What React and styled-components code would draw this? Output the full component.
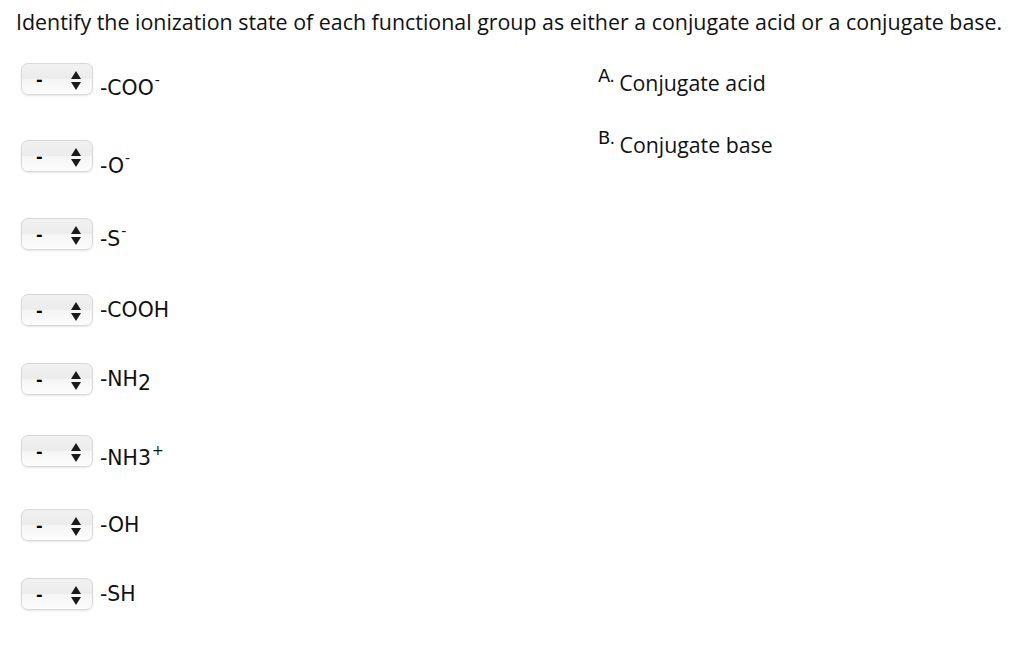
import React from "react";
import styled, { createGlobalStyle } from "styled-components";

const Global = createGlobalStyle`
  html, body { margin: 0; padding: 0; background: #fff; }
  body { font-family: "Open Sans", "Liberation Sans", sans-serif; color: #111; }
`;

const Page = styled.div`
  width: 1024px;
  height: 646px;
  box-sizing: border-box;
  padding: 8px 0 0 16px;
  overflow: hidden;
`;

const Prompt = styled.p`
  margin: 0;
  font-size: 21.4px;
  line-height: 28px;
  color: #111;
  white-space: nowrap;
`;

const Body = styled.div`
  display: grid;
  grid-template-columns: 577px 1fr;
  padding-left: 5px;
`;

const List = styled.div`
  display: flex;
  flex-direction: column;
`;

const Row = styled.div`
  display: flex;
  align-items: center;
  gap: 7px;
  height: 32px;
  margin-top: ${(p) => p.$space}px;
`;

const SelectWrap = styled.div`
  position: relative;
  width: 72px;
  height: 32px;
  flex: none;
`;

const Select = styled.select`
  appearance: none;
  -webkit-appearance: none;
  width: 100%;
  height: 100%;
  box-sizing: border-box;
  margin: 0;
  padding: 0 0 0 14px;
  border: 1px solid #d8d8d8;
  border-radius: 7px;
  background: linear-gradient(#f1f1f1 0%, #ececec 48%, #f5f5f5 52%, #fcfcfc 100%);
  box-shadow: 0 1px 2px rgba(0, 0, 0, 0.1), inset 0 -1px 1px rgba(255, 255, 255, 0.9);
  font-family: "DejaVu Sans", sans-serif;
  font-size: 16px;
  font-weight: bold;
  color: #000;
  outline: none;
`;

const Arrows = styled.svg`
  position: absolute;
  right: 12px;
  top: 8px;
  width: 10px;
  height: 19px;
  pointer-events: none;
`;

const Label = styled.span`
  font-family: "DejaVu Sans", sans-serif;
  font-size: 20.4px;
  color: #111;
  line-height: 24px;
  white-space: nowrap;
  transform: translateY(${(p) => p.$drop}px);
`;

const Sup = styled.span`
  font-size: 14px;
  position: relative;
  top: -10px;
  margin-left: 1px;
`;

const Low = styled.span`
  position: relative;
  top: 4px;
`;

const Options = styled.div`
  display: flex;
  flex-direction: column;
  gap: 31px;
  padding-top: 30px;
`;

const Option = styled.div`
  display: flex;
  align-items: flex-start;
  gap: 5px;
`;

const Letter = styled.span`
  font-family: "DejaVu Sans", sans-serif;
  font-size: 18px;
  letter-spacing: -0.8px;
  line-height: 20px;
`;

const OptionText = styled.span`
  font-size: 21.3px;
  line-height: 28px;
  padding-top: 3px;
`;

const groups = [
  { space: 27, drop: 10, text: <>-COO<Sup>-</Sup></> },
  { space: 45, drop: 11, text: <>-O<Sup>-</Sup></> },
  { space: 46, drop: 6, text: <>-S<Sup>-</Sup></> },
  { space: 44, drop: 0, text: <>-COOH</> },
  { space: 37, drop: 0, text: <>-NH<Low>2</Low></> },
  { space: 40, drop: 8, text: <>-NH3<Sup>+</Sup></> },
  { space: 42, drop: 0, text: <>-OH</> },
  { space: 37, drop: 0, text: <>-SH</> },
];

function SortArrows() {
  return (
    <Arrows viewBox="0 0 10 19">
      <path d="M5 0 L10 8 L0 8 Z" fill="#1a1a1a" />
      <path d="M0 11 L10 11 L5 19 Z" fill="#1a1a1a" />
    </Arrows>
  );
}

export default function App() {
  return (
    <Page>
      <Global />
      <Prompt>
        Identify the ionization state of each functional group as either a conjugate acid or a conjugate base.
      </Prompt>
      <Body>
        <List>
          {groups.map((g, i) => (
            <Row key={i} $space={g.space}>
              <SelectWrap>
                <Select defaultValue="-">
                  <option value="-">-</option>
                  <option value="A">A</option>
                  <option value="B">B</option>
                </Select>
                <SortArrows />
              </SelectWrap>
              <Label $drop={g.drop}>{g.text}</Label>
            </Row>
          ))}
        </List>
        <Options>
          <Option>
            <Letter>A.</Letter>
            <OptionText>Conjugate acid</OptionText>
          </Option>
          <Option>
            <Letter>B.</Letter>
            <OptionText>Conjugate base</OptionText>
          </Option>
        </Options>
      </Body>
    </Page>
  );
}
